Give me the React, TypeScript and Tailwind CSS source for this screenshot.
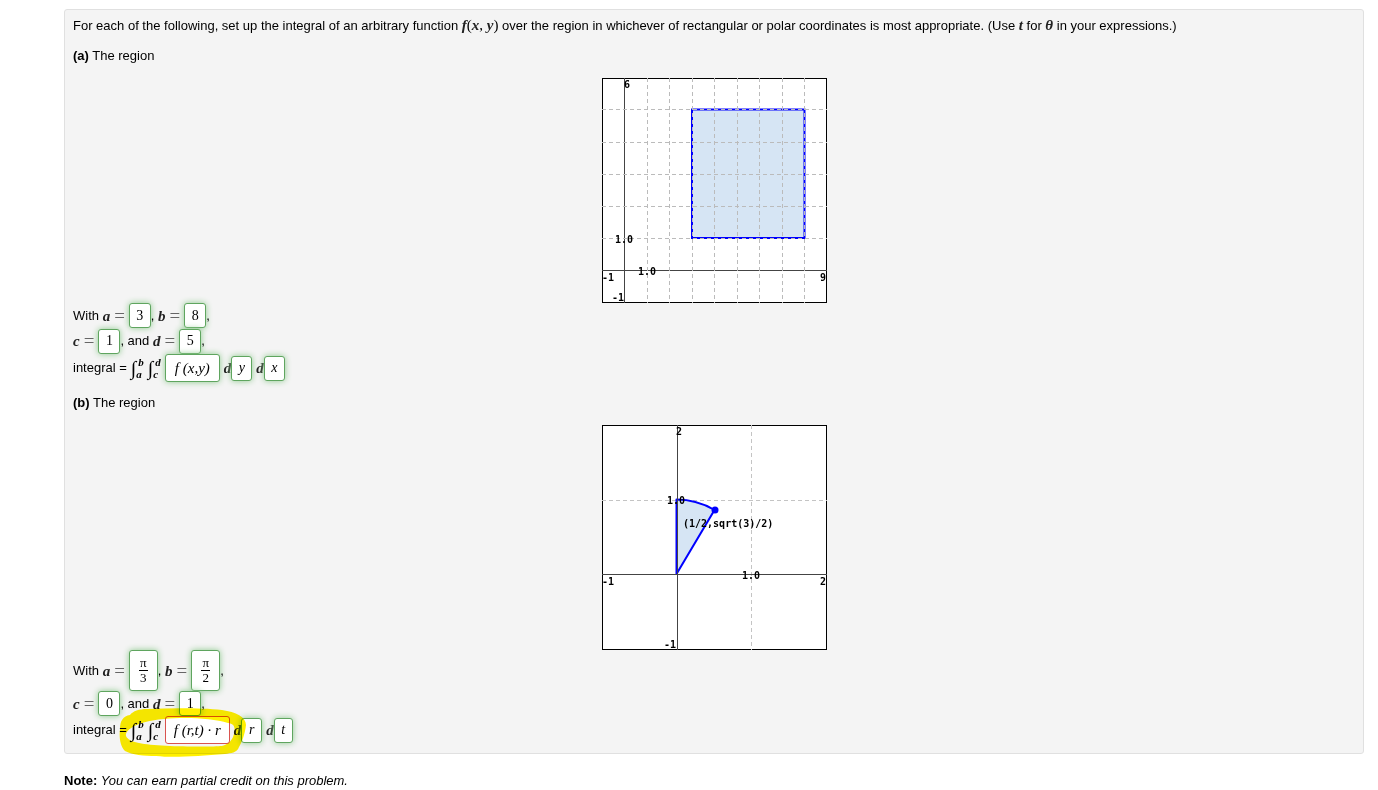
import React from 'react';

const Var = ({ children }: { children: React.ReactNode }) => (
  <i className="font-['Liberation_Serif',serif] text-[15px] font-bold leading-4 text-[#222]">{children}</i>
);

const Equals = () => (
  <span className="mx-1 font-['Liberation_Serif',serif] text-[19px] leading-4 text-[#666]">=</span>
);

interface AnswerProps {
  label: string;
  value: string;
  className: string;
  wrong?: boolean;
}

const Answer: React.FC<AnswerProps> = ({ label, value, className, wrong }) => (
  <input
    type="text"
    aria-label={label}
    defaultValue={value}
    className={`rounded-[3px] border bg-white text-center font-['Liberation_Serif',serif] outline-none ${
      wrong ? 'border-[#d9534f]' : 'border-[#5fa55f] shadow-[0_0_6px_#8cc98c]'
    } ${className}`}
  />
);

const FractionAnswer = ({ label, top, bottom }: { label: string; top: string; bottom: string }) => (
  <span className="flex h-[41px] w-[29px] flex-col items-center justify-center rounded-[3px] border border-[#5fa55f] bg-white font-['Liberation_Serif',serif] text-[13px] shadow-[0_0_6px_#8cc98c]">
    <input
      type="text"
      aria-label={`${label} numerator`}
      defaultValue={top}
      className="h-[14px] w-[9px] border-b border-black text-center outline-none"
    />
    <input
      type="text"
      aria-label={`${label} denominator`}
      defaultValue={bottom}
      className="h-[14px] w-[9px] text-center outline-none"
    />
  </span>
);

const Integral = ({ lower, upper }: { lower: string; upper: string }) => (
  <span className="mr-1 flex items-center font-['Liberation_Serif',serif]">
    <i className="text-[20px] leading-5">∫</i>
    <span className="flex flex-col text-[11px] font-bold italic leading-[12px]">
      <span className="pl-[2px]">{upper}</span>
      <span>{lower}</span>
    </span>
  </span>
);

const gridX = [45, 67, 90, 112, 135, 157, 180, 202];
const gridY = [31, 64, 96, 128, 160];

const RectangleGraph = () => (
  <svg
    className="mx-auto mt-3 block"
    width="225"
    height="225"
    viewBox="0 0 225 225"
    role="img"
    aria-label="Rectangular region"
  >
    <rect x="0.5" y="0.5" width="224" height="224" fill="#fff" stroke="#000" />
    <rect x="90" y="31" width="112" height="129" fill="#d6e5f4" />
    <path d="M22.5 0V225M0 192.5H225" stroke="#444" />
    <path d="M90 31.5H202.5V160H90Z" fill="none" stroke="#00f" strokeWidth="2" />
    <g stroke="#bbb" strokeDasharray="4 3">
      {gridX.map((x) => (
        <line key={x} x1={x + 0.5} x2={x + 0.5} y1="0" y2="225" />
      ))}
      {gridY.map((y) => (
        <line key={y} x1="0" x2="225" y1={y + 0.5} y2={y + 0.5} />
      ))}
    </g>
    <g className="font-['DejaVu_Sans_Mono',monospace] text-[10px] font-bold">
      <text x="22" y="10">6</text>
      <text x="13" y="165">1.0</text>
      <text x="36" y="197">1.0</text>
      <text x="0" y="203">-1</text>
      <text x="218" y="203">9</text>
      <text x="10" y="223">-1</text>
    </g>
  </svg>
);

const SectorGraph = () => (
  <svg
    className="mx-auto mt-3 block"
    width="225"
    height="225"
    viewBox="0 0 225 225"
    role="img"
    aria-label="Circular sector region"
  >
    <rect x="0.5" y="0.5" width="224" height="224" fill="#fff" stroke="#000" />
    <path d="M149.5 0V225M0 75.5H225" stroke="#c4c4c4" strokeDasharray="4 3" />
    <path
      d="M74.5 149V74.5A75 75 0 0 1 112.5 85Z"
      fill="#d6e5f4"
      stroke="#00f"
      strokeWidth="2"
      strokeLinejoin="round"
    />
    <path d="M75.5 0V225M0 149.5H225" stroke="#444" />
    <circle cx="113" cy="85" r="3.5" fill="#00f" />
    <g className="font-['DejaVu_Sans_Mono',monospace] text-[10px] font-bold">
      <text x="74" y="10">2</text>
      <text x="65" y="79">1.0</text>
      <text x="81" y="102">(1/2,sqrt(3)/2)</text>
      <text x="140" y="154">1.0</text>
      <text x="0" y="160">-1</text>
      <text x="218" y="160">2</text>
      <text x="62" y="223">-1</text>
    </g>
  </svg>
);

export default function App() {
  return (
    <main className="pl-16 pr-[14px] pt-[9px] font-['Liberation_Sans',Arial,sans-serif] text-[13px] leading-5 text-black">
      <section className="rounded-[3px] border border-[#e0e0e0] bg-[#f4f4f4] px-2 pb-[9px] pt-[6px]">
        <p>
          For each of the following, set up the integral of an arbitrary function <Var>f</Var>
          <span className="font-['Liberation_Serif',serif] text-[15px] leading-4">
            (<Var>x</Var>, <Var>y</Var>)
          </span>{' '}
          over the region in whichever of rectangular or polar coordinates is most appropriate. (Use{' '}
          <Var>t</Var> for <Var>θ</Var> in your expressions.)
        </p>

        <p className="mt-[10px]">
          <b>(a)</b> The region
        </p>
        <RectangleGraph />
        <div className="flex h-[25px] items-center">
          With&nbsp;<Var>a</Var>
          <Equals />
          <Answer label="a" value="3" className="h-[25px] w-[22px] text-[14px]" />
          <span>,&nbsp;</span>
          <Var>b</Var>
          <Equals />
          <Answer label="b" value="8" className="h-[25px] w-[22px] text-[14px]" />,
        </div>
        <div className="flex h-[26px] items-center">
          <Var>c</Var>
          <Equals />
          <Answer label="c" value="1" className="h-[25px] w-[22px] text-[14px]" />
          <span>, and&nbsp;</span>
          <Var>d</Var>
          <Equals />
          <Answer label="d" value="5" className="h-[25px] w-[22px] text-[14px]" />,
        </div>
        <div className="flex h-7 items-center">
          <span className="mr-1">integral =</span>
          <Integral lower="a" upper="b" />
          <Integral lower="c" upper="d" />
          <Answer label="integrand" value="f (x,y)" className="mr-1 h-7 w-[55px] text-[15px] italic" />
          <Var>d</Var>
          <Answer label="inner variable" value="y" className="mr-1 h-[25px] w-[21px] text-[14px] italic" />
          <Var>d</Var>
          <Answer label="outer variable" value="x" className="h-[25px] w-[21px] text-[14px] italic" />
        </div>

        <p className="mt-[11px]">
          <b>(b)</b> The region
        </p>
        <SectorGraph />
        <div className="flex h-[41px] items-center">
          With&nbsp;<Var>a</Var>
          <Equals />
          <FractionAnswer label="a" top="π" bottom="3" />
          <span>,&nbsp;</span>
          <Var>b</Var>
          <Equals />
          <FractionAnswer label="b" top="π" bottom="2" />,
        </div>
        <div className="flex h-[25px] items-center">
          <Var>c</Var>
          <Equals />
          <Answer label="c" value="0" className="h-[25px] w-[22px] text-[14px]" />
          <span>, and&nbsp;</span>
          <Var>d</Var>
          <Equals />
          <Answer label="d" value="1" className="h-[25px] w-[22px] text-[14px]" />,
        </div>
        <div className="relative flex h-7 items-center">
          <span className="mr-1">integral =</span>
          <Integral lower="a" upper="b" />
          <Integral lower="c" upper="d" />
          <Answer label="integrand" value="f (r,t) · r" className="mr-1 h-7 w-[65px] text-[15px] italic" wrong />
          <Var>d</Var>
          <Answer label="inner variable" value="r" className="mr-1 h-[25px] w-[21px] text-[14px] italic" />
          <Var>d</Var>
          <Answer label="outer variable" value="t" className="h-[25px] w-[19px] text-[14px] italic" />
          <svg
            className="pointer-events-none absolute -top-2 left-[46px] mix-blend-multiply"
            width="128"
            height="50"
            viewBox="0 0 128 50"
            aria-hidden="true"
          >
            <path
              d="M1 21C1 13 4 8 11 7C14 3 20 1 28 1C55 0 83 0 103 2C117 4 127 9 127 17C126 26 123 34 120 39C118 45 112 45 106 46C80 48 55 50 37 48C25 48 13 47 6 43C1 38 0 29 1 21ZM7 26C6 29 10 33 20 35C38 39 92 39 103 38C110 36 112 33 114 29C117 20 116 16 109 15C93 10 66 9 45 11C31 12 10 17 7 26Z"
              fill="#fff000"
              fillRule="evenodd"
            />
          </svg>
        </div>
      </section>

      <p className="mt-[17px]">
        <b>Note:</b> <i>You can earn partial credit on this problem.</i>
      </p>
    </main>
  );
}
